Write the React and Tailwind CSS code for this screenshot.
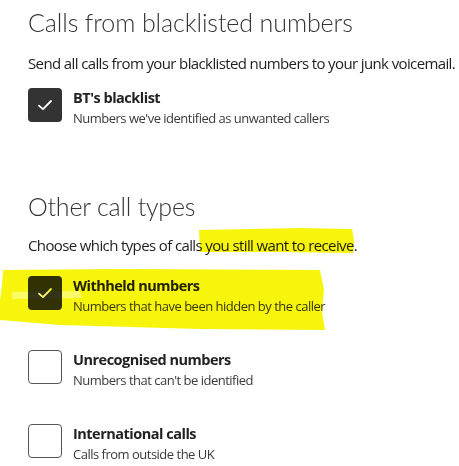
import React from 'react';

const Check = () => (
  <svg viewBox="0 0 16 16" className="w-[16px] h-[16px]" fill="none" stroke="white" strokeWidth={1.8} strokeLinecap="round" strokeLinejoin="round">
    <path d="M2 8.6l4 3.6 8-8.2" />
  </svg>
);

const Option = ({ title, desc, checked, className = '' }) => (
  <div className={`flex items-start gap-[11px] ${className}`}>
    <div
      className={`w-[34px] h-[34px] shrink-0 rounded-[4px] flex items-center justify-center ${
        checked ? 'bg-[#333333]' : 'bg-white border border-[#555]'
      }`}
    >
      {checked && <Check />}
    </div>
    <div>
      <div className="text-[14.5px] font-bold text-[#222] leading-[20px] tracking-[-0.5px]">{title}</div>
      <div className="text-[13px] text-[#3a3a3a] leading-[18px] tracking-[-0.5px] mt-[1px]">{desc}</div>
    </div>
  </div>
);

export default function App() {
  return (
    <div className="relative w-[459px] h-[466px] bg-white overflow-hidden" style={{ fontFamily: '"Open Sans", "Noto Sans", sans-serif' }}>
      <div className="px-[28px] pt-[7px]">
        <h1 className="font-['Lato',sans-serif] text-[25px] font-light text-[#333] leading-[30px] tracking-[-0.1px]">
          Calls from blacklisted numbers
        </h1>
        <p className="text-[15px] text-[#1e1e1e] mt-[16px] leading-[20px] tracking-[-0.62px] whitespace-nowrap">
          Send all calls from your blacklisted numbers to your junk voicemail.
        </p>
        <Option className="mt-[15px]" checked title="BT's blacklist" desc="Numbers we've identified as unwanted callers" />

        <h2 className="font-['Lato',sans-serif] text-[25px] font-light text-[#333] leading-[30px] mt-[64px] tracking-[-0.2px]">Other call types</h2>
        <p className="text-[15px] text-[#1e1e1e] mt-[14px] leading-[20px] tracking-[-0.62px]">
          Choose which types of calls you still want to receive.
        </p>
        <Option className="mt-[21px]" checked title="Withheld numbers" desc="Numbers that have been hidden by the caller" />
        <Option className="mt-[35px]" title="Unrecognised numbers" desc="Numbers that can't be identified" />
        <Option className="mt-[35px]" title="International calls" desc="Calls from outside the UK" />
      </div>

      {/* highlighter marks */}
      <svg className="absolute inset-0 pointer-events-none mix-blend-multiply" width="459" height="466">
        <path d="M199 230 L300 228 L352 229 L354 240 L353 253 L280 252 L200 252 Z" fill="#f7f50c" />
        <path d="M3 270 L120 269 L320 270 L324 290 L322 312 L325 330 L200 329 L60 325 L0 320 L0 300 L2 285 Z" fill="#f7f50c" />
        <path d="M12 292 L80 291 L82 298 L12 299 Z" fill="#fbfb6a" />
      </svg>
    </div>
  );
}
